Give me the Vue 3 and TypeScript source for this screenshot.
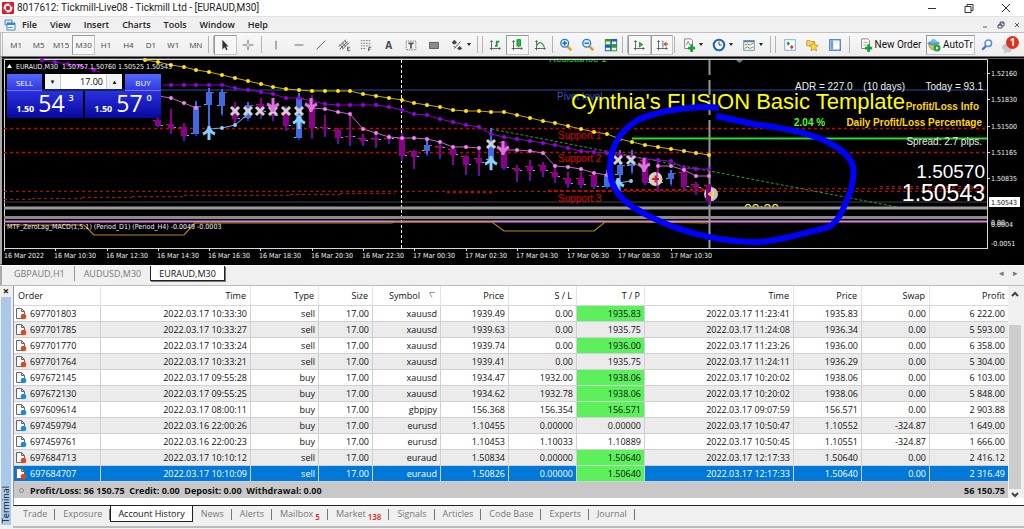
<script setup lang="ts">
import { computed, ref } from 'vue'

interface Candle { x: number; high: number; low: number; top: number; bottom: number; up: boolean }
interface Order {
  id: string; open: string; type: 'buy' | 'sell'; symbol: string; price: string
  sl: string; tp: string; hit: boolean; close: string; exit: string; swap: string; profit: string
}

const menus = ['File', 'View', 'Insert', 'Charts', 'Tools', 'Window', 'Help']
const frames = ['M1', 'M5', 'M15', 'M30', 'H1', 'H4', 'D1', 'W1', 'MN']
const frame = ref('M30')
const volume = ref('17.00')

const START = 145.2
const STEP = 12.82
const barX = (i: number) => Math.round(START + i * STEP)

const slowMa = [60, 62, 65, 67, 70, 72, 75, 78, 81, 84, 87, 89, 90, 91, 91, 91, 91, 94, 96, 98, 100, 103, 105, 107, 110, 111, 111, 112, 112, 115, 118, 121, 123, 126, 129, 132, 134, 139, 142, 145, 147, 149, 151, 153, 155]
const midMa = [85, 85, 85, 85, 85, 85, 85, 88, 90, 92, 94, 98, 98, 101, 104, 105, 105, 105, 105, 107, 110, 114, 115, 119, 122, 125, 127, 134, 137, 139, 141, 143, 145, 148, 151, 152, 153, 155, 157, 159, 160, 161, 168, 169, 169]
const earlyMa = [[42, 60], [55, 62], [68, 64], [80, 66], [94, 70], [100, 72]]
const fastMa: [number, number[]][] = [
  [1, [96, 98, 103, 108]],
  [13, [108, 109, 112, 114, 129, 133, 137, 138, 138, 139, 142, 147, 147, 148]],
  [28, [150, 150, 151, 153, 166, 167, 169, 173, 175]],
  [40, [166, 166, 170, 176, 176]],
]

const pts = (ys: number[], from = 0) => ys.map((y, i) => [barX(from + i), y])
const line = (p: number[][]) => p.map((q) => q.join(',')).join(' ')
const slow = pts(slowMa)
const mid = pts(midMa).slice(2)
const fast = fastMa.map(([from, ys]) => pts(ys, from))

const raw: [number, number, number, number, number][] = [
  [118, 126, 120, 126, 0], [109, 133, 124, 128, 0], [123, 140, 127, 136, 0], [101, 135, 106, 134, 1],
  [88, 129, 92, 105, 1], [89, 115, 92, 106, 1], [102, 124, 107, 119, 0], [102, 120, 105, 118, 1],
  [98, 118, 104, 112, 0], [98, 120, 106, 116, 0], [106, 130, 112, 126, 0], [93, 139, 98, 138, 1],
  [95, 138, 105, 128, 0], [115, 136, 127, 129, 0], [128, 143, 130, 138, 0], [114, 145, 136, 137, 0],
  [134, 145, 138, 141, 0], [131, 147, 138, 140, 0], [134, 143, 138, 139, 0], [133, 160, 138, 156, 0],
  [150, 168, 151, 157, 0], [140, 155, 145, 151, 1], [144, 158, 146, 148, 0], [146, 164, 149, 155, 0],
  [155, 174, 156, 165, 0], [149, 175, 158, 163, 0], [128, 170, 146, 160, 1], [141, 169, 142, 168, 0],
  [165, 181, 168, 171, 0], [160, 180, 166, 171, 0], [162, 176, 165, 171, 0], [168, 182, 172, 177, 0],
  [172, 187, 178, 184, 0], [172, 187, 178, 185, 0], [174, 188, 175, 187, 0], [170, 188, 175, 187, 1],
  [150, 192, 165, 175, 1], [150, 173, 164, 166, 1], [158, 184, 160, 183, 0], [160, 190, 176, 183, 0],
  [170, 185, 173, 179, 1], [170, 190, 172, 187, 0], [182, 194, 184, 188, 0], [184, 204, 185, 201, 0],
]
const candles: Candle[] = raw.map(([high, low, top, bottom, up], i) => ({ x: barX(i + 1), high, low, top, bottom, up: up === 1 }))

const crosses = [[235, 111], [248, 111], [260, 111], [273, 111], [286, 111], [299, 111], [491, 144], [618, 160], [631, 160]]
const upArrows = [[209, 126], [299, 115], [491, 156], [618, 178]]
const downArrows = [[273, 112], [311, 112], [503, 155], [644, 172]]
const times = ['16 Mar 2022', '16 Mar 10:30', '16 Mar 12:30', '16 Mar 14:30', '16 Mar 16:30', '16 Mar 18:30', '16 Mar 20:30', '16 Mar 22:30', '17 Mar 00:30', '17 Mar 02:30', '17 Mar 04:30', '17 Mar 06:30', '17 Mar 08:30', '17 Mar 10:30']
const scale: [string, number][] = [['1.52160', 76], ['1.51830', 102], ['1.51500', 129], ['1.51165', 155], ['1.50835', 181], ['0.00', 225], ['0.0004', 227], ['-0.0051', 246]]

const o = (id: string, open: string, type: 'buy' | 'sell', symbol: string, price: string, sl: string, tp: string, hit: boolean, close: string, exit: string, swap: string, profit: string): Order =>
  ({ id, open: '2022.03.' + open, type, symbol, price, sl, tp, hit, close: '2022.03.17 ' + close, exit, swap, profit })
const orders: Order[] = [
  o('697701803', '17 10:33:30', 'sell', 'xauusd', '1939.49', '0.00', '1935.83', true, '11:23:41', '1935.83', '0.00', '6 222.00'),
  o('697701785', '17 10:33:27', 'sell', 'xauusd', '1939.63', '0.00', '1935.75', false, '11:24:08', '1936.34', '0.00', '5 593.00'),
  o('697701770', '17 10:33:24', 'sell', 'xauusd', '1939.74', '0.00', '1936.00', true, '11:23:26', '1936.00', '0.00', '6 358.00'),
  o('697701764', '17 10:33:21', 'sell', 'xauusd', '1939.41', '0.00', '1935.75', false, '11:24:11', '1936.29', '0.00', '5 304.00'),
  o('697672145', '17 09:55:28', 'buy', 'xauusd', '1934.47', '1932.00', '1938.06', true, '10:20:02', '1938.06', '0.00', '6 103.00'),
  o('697672130', '17 09:55:25', 'buy', 'xauusd', '1934.62', '1932.78', '1938.06', true, '10:20:02', '1938.06', '0.00', '5 848.00'),
  o('697609614', '17 08:00:11', 'buy', 'gbpjpy', '156.368', '156.354', '156.571', true, '09:07:59', '156.571', '0.00', '2 903.88'),
  o('697459794', '16 22:00:26', 'buy', 'eurusd', '1.10455', '0.00000', '0.00000', false, '10:50:47', '1.10552', '-324.87', '1 649.00'),
  o('697459761', '16 22:00:23', 'buy', 'eurusd', '1.10453', '1.10033', '1.10889', false, '10:50:45', '1.10551', '-324.87', '1 666.00'),
  o('697684713', '17 10:10:12', 'sell', 'euraud', '1.50834', '0.00000', '1.50640', true, '12:17:33', '1.50640', '0.00', '2 416.12'),
  o('697684707', '17 10:10:09', 'sell', 'euraud', '1.50826', '0.00000', '1.50640', true, '12:17:33', '1.50640', '0.00', '2 316.49'),
]
const selected = ref('697684707')
const columns = ['Order', 'Time', 'Type', 'Size', 'Symbol', 'Price', 'S / L', 'T / P', 'Time', 'Price', 'Swap', 'Profit']
const total = computed(() => '56 150.75')

const chartTabs = ['GBPAUD,H1', 'AUDUSD,M30', 'EURAUD,M30']
const activeChart = ref('EURAUD,M30')
const panes: { name: string; count?: string }[] = [
  { name: 'Trade' }, { name: 'Exposure' }, { name: 'Account History' }, { name: 'News' }, { name: 'Alerts' },
  { name: 'Mailbox', count: '5' }, { name: 'Market', count: '138' }, { name: 'Signals' }, { name: 'Articles' },
  { name: 'Code Base' }, { name: 'Experts' }, { name: 'Journal' },
]
const pane = ref('Account History')
</script>

<template>
  <div class="app">
    <header class="title">
      <svg class="logo" viewBox="0 0 13 13" aria-hidden="true">
        <rect width="13" height="13" rx="1" fill="#d5202b" />
        <circle cx="6.5" cy="6.5" r="3.6" fill="none" stroke="#fff" stroke-width="2.4" />
        <path d="M2 8 5 11M8 2l3 3" stroke="#d5202b" stroke-width="1.2" />
      </svg>
      <h1>8017612: Tickmill-Live08 - Tickmill Ltd - [EURAUD,M30]</h1>
      <div class="caption">
        <button aria-label="Minimize"><svg viewBox="0 0 10 10"><path d="M1 5.5h8" /></svg></button>
        <button aria-label="Restore"><svg viewBox="0 0 10 10"><path d="M1 3.5h6v6H1zM3 3.5V1.5h6v6H7" /></svg></button>
        <button aria-label="Close"><svg viewBox="0 0 10 10"><path d="M1 1l8 8M9 1 1 9" /></svg></button>
      </div>
    </header>

    <nav class="menu" aria-label="Main">
      <svg class="doc-icon" viewBox="0 0 12 12" aria-hidden="true">
        <path d="M1 1h7v5H1z" fill="#cfe4f7" stroke="#4a90d0" />
        <path d="M3 4h8v7H3z" fill="#fff" stroke="#3c85c8" />
        <path d="M3 5h8" stroke="#3c85c8" stroke-width="2" />
        <path d="m4 9 2-1 1 1 2-1" fill="none" stroke="#3c85c8" />
      </svg>
      <button v-for="m in menus" :key="m">{{ m }}</button>
      <div class="child-caption">
        <button aria-label="Minimize chart"><svg viewBox="0 0 8 8"><path d="M2 6h4" /></svg></button>
        <button aria-label="Restore chart"><svg viewBox="0 0 8 8"><path d="M1 4h4v3H1zM3 4V1h4v4H5M3 2h4M1 4h4" /></svg></button>
        <button aria-label="Close chart"><svg viewBox="0 0 8 8"><path d="M2 2l4 4M6 2 2 6" /></svg></button>
      </div>
    </nav>

    <div class="toolbar" role="toolbar" aria-label="Chart tools">
      <div class="frames">
        <button v-for="f in frames" :key="f" :class="{ on: f === frame }" @click="frame = f">{{ f }}</button>
      </div>
      <i class="grip"></i>
      <div class="pair">
        <button class="on" aria-label="Cursor"><svg viewBox="0 0 16 16"><path d="M5 2v11l2.6-2.5L9.500 14l1.500-.8-1.900-3.500H12z" fill="#333" /></svg></button>
        <button aria-label="Crosshair"><svg viewBox="0 0 16 16" class="ln"><path d="M8 2v5M8 9v5M2 8h5M9 8h5" /></svg></button>
      </div>
      <i class="bar"></i>
      <div class="draw">
        <button aria-label="Vertical line"><svg viewBox="0 0 16 16" class="ln"><path d="M8 3v10" /></svg></button>
        <button aria-label="Horizontal line"><svg viewBox="0 0 16 16" class="ln"><path d="M3 8h10" /></svg></button>
        <button aria-label="Trendline"><svg viewBox="0 0 16 16" class="ln"><path d="M3 13 13 3" /></svg></button>
        <button aria-label="Channel"><svg viewBox="0 0 16 16" class="ln"><path d="M2 10 10 2M3 13l9-9M6 13l8-8M3 7l4 5M6 5l4 5M9 3l3 4" /><path d="M15 10.5h-3v4h3M12 12.5h2" /></svg></button>
        <button aria-label="Fibonacci"><svg viewBox="0 0 16 16" class="ln"><path d="M2 3h12M2 6h12M2 9h12M2 12h6" stroke-dasharray="2 1" stroke="#777" /><path d="M11 15v-4h3M11 13h2" /></svg></button>
        <button aria-label="Text"><b>A</b></button>
        <button aria-label="Text label"><svg viewBox="0 0 16 16" class="ln"><path d="M2.5 3.5h11v10h-11z" stroke-dasharray="1 1" /><path d="M5 6h6M8 6v6" stroke-width="2" /></svg></button>
        <button aria-label="Rectangle"><svg viewBox="0 0 16 16"><rect x="3" y="5" width="10" height="7" fill="#8b8b8b" stroke="#555" /></svg></button>
      </div>
      <button class="drop" aria-label="Arrows"><svg viewBox="0 0 16 16"><path d="m5 2 3 3-2 2H4L2 5zM11 9l3 3-3 2-3-2z" fill="#444" /><path d="m5 12 7-8M4 9l2 2" stroke="#444" /></svg><i></i></button>
      <i class="grip wide"></i>
      <div class="trio">
        <button aria-label="Bar chart"><svg viewBox="0 0 16 16" class="ln"><path d="M4 3v11M2 12h12M2.5 4.5 4 3l1.5 1.5M12.5 10.5 14 12l-1.5 1.5" /><path d="M10 3v7M8 9h2M10 4h3" stroke="#1a9a2d" stroke-width="2" /></svg></button>
        <button class="on" aria-label="Candlesticks"><svg viewBox="0 0 16 16" class="ln"><path d="M4 3v11M2 12h12M2.5 4.5 4 3l1.5 1.5M12.5 10.5 14 12l-1.5 1.5" /><path d="M10 1v10" stroke="#0a8a20" /><rect x="8" y="2" width="4" height="7" fill="#22c040" stroke="#0a8a20" /></svg></button>
        <button aria-label="Line chart"><svg viewBox="0 0 16 16" class="ln"><path d="M4 3v11M2 12h12M2.5 4.5 4 3l1.5 1.5M12.5 10.5 14 12l-1.5 1.5" /><path d="M4 9c3-5 5-5 9 1" stroke="#2aa040" stroke-width="1.5" /></svg></button>
      </div>
      <i class="bar thin"></i>
      <div class="trio">
        <button aria-label="Zoom in"><svg viewBox="0 0 16 16"><path d="m9 9 5 5" stroke="#d8a72a" stroke-width="3" /><circle cx="6.5" cy="6" r="4.5" fill="#d5ebfb" stroke="#2c7cc4" stroke-width="1.5" /><path d="M4 6h5M6.5 3.5v5" stroke="#1c66b0" stroke-width="1.5" /></svg></button>
        <button aria-label="Zoom out"><svg viewBox="0 0 16 16"><path d="m9 9 5 5" stroke="#d8a72a" stroke-width="3" /><circle cx="6.5" cy="6" r="4.5" fill="#d5ebfb" stroke="#2c7cc4" stroke-width="1.5" /><path d="M4 6h5" stroke="#1c66b0" stroke-width="1.5" /></svg></button>
        <button aria-label="Tile windows"><svg viewBox="0 0 16 16"><path d="M1 1h7v7H1zM8 8h7v7H8z" fill="#339922" /><path d="M8 1h7v7H8zM1 8h7v7H1z" fill="#2458c8" /><path d="M2 4h5v3H2zM9 4h5v3H9zM2 11h5v3H2zM9 11h5v3H9z" fill="#e4f2e4" /></svg></button>
      </div>
      <i class="grip small"></i>
      <div class="pair">
        <button class="on" aria-label="Auto scroll"><svg viewBox="0 0 16 16" class="ln"><path d="M4 3v11M2 12h12M2.5 4.5 4 3l1.5 1.5M12.5 10.5 14 12l-1.5 1.5" /><path d="M8 4v7l5-3.5z" fill="#28a838" stroke="none" /></svg></button>
        <button class="on" aria-label="Chart shift"><svg viewBox="0 0 16 16" class="ln"><path d="M4 3v11M2 12h12M2.5 4.5 4 3l1.5 1.5M12.5 10.5 14 12l-1.5 1.5" /><path d="M9 3v8" stroke="#2c6cc0" /><path d="M15 7h-4" stroke="#d05020" stroke-width="1.5" /><path d="M13 4v6l-3.5-3z" fill="#d05020" stroke="none" /></svg></button>
      </div>
      <i class="bar thin"></i>
      <button class="drop" aria-label="Indicators"><svg viewBox="0 0 16 16"><path d="M3 1h7l2 2v9H3z" fill="#fff" stroke="#777" /><path d="m5 8 2-4 2 4" fill="none" stroke="#777" /><path d="M11 7v9M7 11.5h8" stroke="#16a030" stroke-width="3" /></svg><i></i></button>
      <button class="drop" aria-label="Periods"><svg viewBox="0 0 16 16"><circle cx="8" cy="8" r="6" fill="#f4f8ff" stroke="#1f66bd" stroke-width="2.4" /><path d="M8 4v4h3" fill="none" stroke="#333" /></svg><i></i></button>
      <button class="drop" aria-label="Templates"><svg viewBox="0 0 16 16"><rect x="2" y="3" width="12" height="11" fill="#fff" stroke="#5a8a9a" /><path d="M2 4h12" stroke="#4a88b8" stroke-width="2" /><path d="m3 8 3-1 3 1 4-2" fill="none" stroke="#c05020" /><path d="m3 12 3-2 3 2 4-2" fill="none" stroke="#209040" /></svg><i></i></button>
      <i class="grip wider"></i>
      <div class="trio">
        <button aria-label="Market watch"><svg viewBox="0 0 16 16"><rect x="2" y="2" width="12" height="12" fill="#fff" stroke="#6da4d8" /><path d="m6 4 2 2-2 3-2-3z" fill="#20a030" /><path d="m10 8 2 2-2 3-2-3z" fill="#d83020" /></svg></button>
        <button aria-label="Favorites"><svg viewBox="0 0 16 16"><path d="M2 3h4l1 1h4v5H2z" fill="#f3cf6a" stroke="#c99a2c" /><path d="m10 5 1.5 3 3.5.5-2.5 2.5.6 3.5L10 13l-3.1 1.5.6-3.500L5 8.500 8.500 8z" fill="#fbd83c" stroke="#c8961a" /></svg></button>
        <button aria-label="Terminal window"><svg viewBox="0 0 16 16"><rect x="2" y="2" width="12" height="12" fill="#fff" stroke="#4a80c0" stroke-width="1.5" /><path d="M3 3h3v10H3z" fill="#6b9fd8" /><path d="M8 5h5" stroke="#cde" /></svg></button>
      </div>
      <i class="bar mid"></i>
      <button class="wide-btn"><svg viewBox="0 0 16 16"><path d="M3 1h7l2 2v9H3z" fill="#fff" stroke="#777" /><path d="M5 5h5M5 8h4" stroke="#999" /><path d="M11 7v9M7 11.5h8" stroke="#16a030" stroke-width="3" /></svg>New Order</button>
      <button class="wide-btn auto on"><svg viewBox="0 0 16 16"><path d="M2 7c1 8 9 9 11 2z" fill="#e9b84e" stroke="#b98a24" /><ellipse cx="7.5" cy="6" rx="7" ry="2.5" fill="#4fa0d8" /><path d="M4 5c0-5 7-5 7 0z" fill="#74bce8" /><circle cx="11.5" cy="11.5" r="4" fill="#22a83a" /><path d="M10.3 9.5v4l3-2z" fill="#fff" /></svg>AutoTr</button>
      <button class="search" aria-label="Search"><svg viewBox="0 0 16 16"><path d="M7 9 2.5 13.5" stroke="#4070c8" stroke-width="2.5" /><circle cx="9.5" cy="6" r="3.7" fill="#fff" stroke="#5a8ce0" stroke-width="1.8" /></svg></button>
      <button class="alert" aria-label="Notifications"><svg viewBox="0 0 20 20"><path d="M1 13c0-6 10-6 10 0s-5 4-5 4l-3 2 .5-3z" fill="#c8c8c8" /></svg><span>1</span></button>
    </div>

    <main class="chart">
      <svg class="plot" viewBox="0 56 1024 210" role="img" aria-label="EURAUD M30 chart">
        <defs><clipPath id="price"><rect x="4" y="60" width="983" height="147" /></clipPath></defs>
        <rect y="56" width="1024" height="210" fill="#000" />
        <rect y="56" width="1024" height="1" fill="#777" />
        <rect x="2" y="58" width="1022" height="1" fill="#555" />
        <path d="M0 56.500h2v208H0z" fill="#aaa" />
        <path d="M4.500 87V59.500H987.500V248M4.500 87V248" class="edge" />
        <path d="M4 90h983" stroke="#2450a8" />
        <g class="red">
          <path d="M4 128.500h983M4 152.500h983" stroke-width="1.5" />
          <path d="M4 191.500H447M4 199.500h28M32 198.500h50M82 197.500h50M132 196.500h52M184 195.500h54M238 195.500h52M290 194.500h50M340 193.500h55M700 188.500H987M495 191.500H987M683 185 709 193M880 186.500H987" />
          <path d="M447 192h48M548 191h70M618 190h90" stroke-width="2" />
        </g>
        <path d="M4 202h983" stroke="#3c424a" />
        <path d="M491 129 902 208" clip-path="url(#price)" stroke="#28a028" stroke-dasharray="3 2" />
        <path d="M632 138.500H987" stroke="#2bdc2b" stroke-width="2" />
        <path d="M401.500 60V248" stroke="#fff" stroke-dasharray="3 2" />
        <path d="M709.500 60V125" stroke="#999" stroke-width="2" stroke-dasharray="15 5" />
        <path d="M709.500 125V248" stroke="#999" stroke-width="2" />
        <path d="m736 60h7l-3.500 3z" fill="#778" />

        <g clip-path="url(#price)">
          <text x="549" y="62" class="tag" fill="#00e000">Resistance 1</text>
          <text x="744" y="214" class="clock">09:30</text>
          <text x="724" y="214" class="clock">←</text>
        </g>
        <text x="557" y="100" class="tag" fill="#2b59cc">Pivot level</text>

        <g v-for="c in candles" :key="c.x" :fill="c.up ? '#4169e1' : '#8a008a'">
          <rect :x="c.x - 1" :y="c.high" width="2" :height="c.low - c.high" />
          <rect :x="c.x - 3" :y="c.top" width="6" :height="c.bottom - c.top" />
          <rect :x="c.x - 5" :y="c.up ? c.bottom - 1 : c.top" width="2" height="1" :fill="c.up ? '#00e5ff' : '#ff0040'" />
          <rect :x="c.x + 3" :y="c.up ? c.top : c.bottom - 1" width="2" height="1" :fill="c.up ? '#ff3030' : '#00e5ff'" />
          <rect :x="c.x - 1" :y="c.low - 1" width="2" height="2" fill="#1c28d8" />
        </g>

        <g class="violet">
          <polyline :points="line(earlyMa)" />
          <circle v-for="p in earlyMa.slice(0, 5)" :key="p[0]" :cx="p[0]" :cy="p[1]" r="2" />
          <polyline :points="line([[163, 85], ...mid])" />
          <circle v-for="p in mid" :key="p[0]" :cx="p[0]" :cy="p[1]" r="2" />
        </g>
        <g v-for="(s, i) in fast" :key="i" class="orchid">
          <polyline :points="line(s)" />
          <circle v-for="p in s" :key="p[0]" :cx="p[0]" :cy="p[1]" r="2" />
        </g>
        <g class="sky">
          <polyline points="209,129 222,128 235,125 248,114" />
          <circle cx="222" cy="128" r="2" /><circle cx="235" cy="125" r="2" />
          <polyline points="618,183 631,181" /><circle cx="631" cy="181" r="2" />
        </g>
        <g class="gold">
          <polyline :points="line(slow)" />
          <circle v-for="p in slow" :key="p[0]" :cx="p[0]" :cy="p[1]" r="2" />
        </g>

        <text x="558" y="139" class="tag" fill="#e00000">Support 1</text>
        <text x="558" y="162" class="tag" fill="#e00000">Support 2</text>
        <text x="558" y="202" class="tag" fill="#e00000">Support 3</text>
        <text x="571" y="109" class="headline">Cynthia's FUSION Basic Template</text>

        <path v-for="([x, y], i) in crosses" :key="'x' + i" :d="`M${x - 4} ${y - 4}l8 8M${x + 4} ${y - 4}l-8 8`" stroke="#d0d0d0" stroke-width="3" />
        <path v-for="([x, y], i) in upArrows" :key="'u' + i" :d="`M${x} ${y}v14M${x - 6} ${y + 8}q5-2 6-7q1 5 6 7`" class="up" />
        <path v-for="([x, y], i) in downArrows" :key="'d' + i" :d="`M${x} ${y}v-14M${x - 6} ${y - 8}q5 2 6 7q1-5 6-7`" class="down" />

        <circle cx="655.500" cy="179" r="7" fill="#d8d2cc" />
        <path d="M652 179h7M655.500 175.500v7" stroke="#e02020" stroke-width="2" />
        <path d="M657 170v18" stroke="#80007f" />
        <circle cx="711" cy="194" r="7" fill="#c8c4bc" />
        <rect x="706" y="186" width="5" height="15" fill="#80007f" />
        <path d="m713 190-5 4 5 4z" fill="#f0c020" stroke="#fff" stroke-width=".5" />

        <path d="M4 208h983" stroke="#9a9a9a" stroke-width="3" />
        <path d="M4 217.500h983" stroke="#8a8a8a" stroke-width="3" />
        <path d="M4 221.500h983" stroke="#e080e0" stroke-width="2" />
        <path d="M4 225h80l10 10h90l11-12h197l2-1h98l12 9h90l11-9h30l73 1" fill="none" stroke="#b08a10" stroke-width="1.2" />
        <path d="M4 248.500H988" class="edge" />

        <text v-for="(t, i) in times" :key="t" :x="i === 0 ? 4 : Math.round(3 + i * 51.28)" y="258" class="axis">{{ t }}</text>
        <path v-for="(t, i) in times" :key="'t' + t" :d="`M${4.5 + Math.round(i * 51.28)} 248v3`" stroke="#ddd" />
        <text v-for="[t, y] in scale" :key="t" x="991" :y="y" class="axis">{{ t }}</text>
        <path d="M987 73.500h3M987 99.500h3M987 126.500h3M987 152.500h3M987 178.500h3" stroke="#ddd" />
        <rect x="989" y="197" width="31" height="10" fill="#fff" />
        <text x="991" y="205" class="axis dark">1.50543</text>

        <path d="m7 68 2.500-4 2.500 4z" fill="#fff" />
        <text x="16" y="69" class="axis">EURAUD,M30&nbsp; 1.50757 1.50760 1.50525 1.50543</text>
        <text x="7" y="229" class="axis">MTF_ZeroLag_MACD(1,5,1) (Period_D1) (Period_H4) -0.0049 -0.0003</text>

        <text x="795" y="90" class="info">ADR = 227.0</text>
        <text x="905" y="90" class="info end">(10 days)</text>
        <text x="983" y="90" class="info end">Today = 93.1</text>
        <text x="979" y="110" class="pl end">Profit/Loss Info</text>
        <text x="794" y="126" class="pl lime">2.04 %</text>
        <text x="982" y="126" class="pl end">Daily Profit/Loss Percentage</text>
        <text x="982" y="145" class="info end">Spread: 2.7 pips.</text>
        <text x="985" y="178" class="ask end">1.50570</text>
        <text x="985" y="201" class="bid end">1.50543</text>

        <path class="scribble" d="M719 108C705 105 660 109 638 120C617 132 609 152 610 172C612 196 630 207 655 219C690 236 730 242 755 242C780 242 810 231 826 228C840 223 844 206 851 190C856 168 855 160 838 148C815 132 780 128 753 124L716 116" />
        <path d="M0 265.500h1024" stroke="#fff" />
      </svg>

      <form class="one-click" @submit.prevent>
        <button class="side" type="button">SELL</button>
        <div class="lots">
          <button type="button" aria-label="Decrease volume">▼</button>
          <input v-model="volume" aria-label="Volume">
          <button type="button" aria-label="Increase volume">▲</button>
        </div>
        <button class="side" type="button">BUY</button>
        <button class="quote" type="button"><small>1.50</small><span>54</span><sup>3</sup></button>
        <button class="quote" type="button"><small>1.50</small><span>57</span><sup>0</sup></button>
      </form>
    </main>

    <nav class="chart-tabs" aria-label="Open charts">
      <button v-for="t in chartTabs" :key="t" :class="{ active: t === activeChart }" @click="activeChart = t">{{ t }}</button>
      <div class="scrollers">
        <button aria-label="Previous charts">◂</button>
        <button aria-label="Next charts">▸</button>
      </div>
    </nav>

    <section class="terminal">
      <aside>
        <button aria-label="Close terminal">×</button>
        <h2>Terminal</h2>
      </aside>
      <div class="body">
        <div class="history">
          <table>
            <colgroup><col v-for="(c, i) in columns" :key="i" :class="'c' + i"></colgroup>
            <thead>
              <tr><th v-for="(c, i) in columns" :key="i" scope="col">{{ c }}<svg v-if="c === 'Symbol'" viewBox="0 0 8 8"><path d="M7 1.5H1.5L4 6.5" /></svg></th></tr>
            </thead>
            <tbody>
              <tr v-for="r in orders" :key="r.id" :class="{ chosen: r.id === selected }" @click="selected = r.id">
                <td>
                  <svg class="sheet" viewBox="0 0 12 13" aria-hidden="true">
                    <path d="M1.5 1.5h5l3 3v7h-8z" fill="#fff" stroke="#666" />
                    <path d="M6.500 1.500v3h3" fill="none" stroke="#666" />
                    <circle cx="8.5" cy="9.5" r="2.8" :fill="r.type === 'sell' ? '#dc4a1e' : '#1f8ad8'" />
                  </svg>{{ r.id }}
                </td>
                <td>{{ r.open }}</td><td>{{ r.type }}</td><td>17.00</td><td>{{ r.symbol }}</td>
                <td>{{ r.price }}</td><td>{{ r.sl }}</td><td :class="{ hit: r.hit }">{{ r.tp }}</td>
                <td>{{ r.close }}</td><td>{{ r.exit }}</td><td>{{ r.swap }}</td><td>{{ r.profit }}</td>
              </tr>
            </tbody>
            <tfoot>
              <tr>
                <td colspan="8"><i></i>Profit/Loss: {{ total }}&nbsp; Credit: 0.00&nbsp; Deposit: 0.00&nbsp; Withdrawal: 0.00</td>
                <td colspan="4">{{ total }}</td>
              </tr>
            </tfoot>
          </table>
          <div class="scroll" aria-hidden="true">
            <svg viewBox="0 0 8 8"><path d="m1 5 3-3 3 3" /></svg>
            <i></i>
            <svg viewBox="0 0 8 8"><path d="m1 3 3 3 3-3" /></svg>
          </div>
        </div>
        <nav class="panes" aria-label="Terminal panes">
          <button v-for="p in panes" :key="p.name" :class="{ active: p.name === pane }" @click="pane = p.name">{{ p.name }}<sub v-if="p.count">{{ p.count }}</sub></button>
        </nav>
      </div>
    </section>
  </div>
</template>

<style>
body { margin: 0; background: #f0f0f0; }
</style>

<style scoped>
.app { font-family: "Open Sans", "Noto Sans", sans-serif; font-size: 9px; color: #111; background: #f0f0f0; }
.app * { box-sizing: border-box; }
button { font: inherit; color: inherit; background: none; border: 0; padding: 0; margin: 0; white-space: nowrap; }
svg { display: block; flex: none; }

.title { display: flex; align-items: center; height: 16px; background: #fff; padding-left: 2px; }
.logo { width: 12px; height: 12px; }
h1 { font-family: Roboto, sans-serif; font-size: 10px; font-weight: 400; margin: 0 0 0 3px; line-height: 14px; color: #222; }
.caption { display: flex; gap: 27px; margin-left: auto; padding-right: 13px; }
.caption svg { width: 10px; height: 10px; fill: none; stroke: #333; }

.menu { display: flex; align-items: center; height: 17px; padding-left: 4px; border-top: 1px solid #e2e2e2; border-bottom: 1px solid #c0c0c0; font-size: 9px; font-weight: 600; color: #222; }
.doc-icon { width: 12px; height: 12px; margin-right: 6px; }
.menu > button { margin-right: 13px; }
.child-caption { display: flex; gap: 8px; margin-left: auto; padding-right: 3px; }
.child-caption svg { width: 8px; height: 8px; fill: none; stroke: #556; }

.toolbar { display: flex; align-items: center; height: 23px; padding-left: 2px; background: linear-gradient(#f8f8f8, #ededed); border-left: 3px double #bbb; }
.toolbar button { height: 20px; display: flex; align-items: center; justify-content: center; }
.toolbar svg { width: 14px; height: 14px; }
.toolbar .ln { fill: none; stroke: #555; }
.toolbar .on { background: #f7f7f7; border: 1px solid #c4c4c4; border-top-color: #999; border-left-color: #999; }
.frames, .pair, .draw, .trio { display: grid; grid-auto-flow: column; grid-auto-columns: 1fr; flex: none; }
.frames { width: 202px; font-size: 8px; color: #444; }
.pair { width: 45px; }
.draw { width: 180px; font-size: 10px; color: #444; }
.trio { width: 67px; }
.grip, .bar { flex: none; height: 17px; width: 7px; }
.grip::before, .bar::before { content: ""; display: block; height: 100%; width: 4px; margin: 0 auto; border: 1px solid #b4b4b4; border-width: 0 1px; }
.bar::before { width: 1px; border-right: 0; }
.bar { width: 6px; }
.bar.thin { width: 4px; }
.bar.mid { width: 8px; }
.grip.wide { width: 9px; }
.grip.small { width: 6px; }
.grip.wider { width: 12px; }
.drop { width: 30px; gap: 3px; flex: none; }
.drop i { border: 2px solid transparent; border-top: 3px solid #222; border-bottom: 0; }
.wide-btn { width: 72px; gap: 2px; flex: none; }
.toolbar .wide-btn { font-family: Roboto, sans-serif; font-size: 10px; }
.wide-btn.auto { width: 49px; overflow: hidden; justify-content: flex-start; }
.search { width: 24px; margin-left: auto; }
.alert { width: 26px; position: relative; flex: none; }
.toolbar .alert svg { width: 20px; height: 20px; }
.alert span { position: absolute; top: 1px; right: 5px; width: 13px; height: 13px; border-radius: 50%; background: #e0301e; color: #fff; font-size: 10px; font-weight: 700; line-height: 13px; }

.chart { position: relative; }
.plot { width: 100%; height: auto; }
.edge { fill: none; stroke: #d8d8d8; }
.red { stroke: #d40000; stroke-dasharray: 3 3; fill: none; }
polyline { fill: none; stroke-width: 1; }
.violet { stroke: #8a00d0; } .violet circle { fill: #9a00e6; stroke: none; }
.orchid { stroke: #c860c8; } .orchid circle { fill: #ee82ee; stroke: none; }
.sky { stroke: #6ab4ee; } .sky circle { fill: #87cefa; stroke: none; }
.gold { stroke: #c8a800; } .gold circle { fill: #ffe600; stroke: none; }
.up, .down { fill: none; stroke-width: 3; stroke: #87cefa; }
.down { stroke: #e070e0; }
.scribble { fill: none; stroke: #0000ff; stroke-width: 6; stroke-linecap: butt; stroke-linejoin: round; }
.tag, .headline, .info, .pl, .ask, .bid, .clock { font-family: "Liberation Sans", Arial, sans-serif; }
.tag { font-size: 10px; }
.headline { font-size: 22px; fill: #ff0; }
.clock { font-size: 14px; fill: #ff0; }
.info { font-size: 10px; fill: #eee; }
.pl { font-size: 10px; font-weight: 700; fill: #ffd800; }
.lime { fill: #50ff30; }
.ask { font-size: 19px; fill: #fff; }
.bid { font-size: 23px; fill: #fff; }
.end { text-anchor: end; }
.axis { font-family: "DejaVu Sans Condensed", "DejaVu Sans", sans-serif; font-size: 7px; fill: #f0f0f0; }
.dark { fill: #111; }

.one-click { position: absolute; left: 7px; top: 18px; width: 154px; display: grid; grid-template-columns: 35px 6px 35px 2px 36px 4px 36px; grid-template-rows: 17px 27px; color: #fff; }
.side { grid-row: 1; background: linear-gradient(#5468ff, #3038e0); font-size: 8px; border-bottom: 1px solid #7078ff; }
.side:first-child { grid-column: 1; }
.side:nth-of-type(2) { grid-column: 7; }
.lots { grid-row: 1; grid-column: 2 / 7; display: flex; margin: 0 3px 2px; background: #fff; color: #111; }
.lots button { width: 15px; font-size: 6px; background: #f2f2f2; }
.lots input { flex: 1; min-width: 0; border: 1px solid #ccc; border-width: 0 1px; padding: 0 3px; font: inherit; text-align: right; }
.quote { grid-row: 2; grid-column: 1 / 4; display: flex; align-items: baseline; justify-content: center; gap: 4px; line-height: 25px; background: linear-gradient(#2a30e0, #0808a0); }
.quote:last-child { grid-column: 5 / 8; }
.quote small { font-size: 9px; font-weight: 700; }
.quote span { font-size: 23px; }
.quote sup { font-size: 9px; font-weight: 600; line-height: 9px; align-self: flex-start; padding-top: 2px; }

.chart-tabs { display: flex; height: 19px; padding-left: 3px; border-left: 2px solid #aaa; align-items: flex-start; color: #777; background: #f0f0f0; }
.chart-tabs > button { height: 15px; line-height: 15px; padding: 0 9px; }
.chart-tabs > button:first-child { border-right: 1px solid #999; }
.chart-tabs .active { background: #fff; color: #111; border: 1px solid #222; border-top: 0; padding: 0 8px; box-shadow: 1px 1px #777; }
.scrollers { margin-left: auto; display: flex; gap: 9px; padding-right: 6px; line-height: 14px; }

.terminal { display: flex; border-top: 1px solid #bbb; }
aside { width: 13px; flex: none; display: flex; flex-direction: column; align-items: center; justify-content: space-between; background: linear-gradient(#f0f0f0 11px, #a9c8ea 11px); border: 1px solid #f0f0f0; border-width: 0 2px 3px 1px; padding-bottom: 2px; }
aside button { font-size: 11px; line-height: 10px; font-weight: 700; height: 10px; }
h2 { margin: 0; font-size: 9px; font-weight: 400; line-height: 10px; writing-mode: vertical-rl; transform: rotate(180deg); }
.body { flex: 1; min-width: 0; }
.history { display: flex; background: #fff; border-bottom: 1px solid #222; padding-bottom: 7px; border-left: 1px solid #999; }
table { flex: 1; width: 100%; border-collapse: separate; border-spacing: 0; table-layout: fixed; }
.c0 { width: 87px; } .c1 { width: 150px; } .c3 { width: 54px; } .c8 { width: 149px; } .c11 { width: 78px; }
.c2, .c4, .c5, .c6, .c7, .c9, .c10 { width: 68px; }
th, td { padding: 0 3px 0 0; text-align: right; height: 16px; line-height: 15px; border-right: 1px solid #d0d0d0; white-space: nowrap; }
th { height: 20px; font-weight: 400; padding-right: 4px; border-color: #e4e4e4; border-bottom: 1px solid #d8d8d8; }
th:first-child { text-align: left; padding-left: 4px; }
th:last-child, td:last-child { border-right: 0; padding-right: 3px; }
th svg { display: inline-block; width: 8px; height: 8px; margin: 0 0 0 8px; fill: none; stroke: #999; }
td { border-bottom: 1px solid #d0d0d0; }
td:first-child { text-align: left; }
tbody tr:nth-child(even) { background: #ebebeb; }
.sheet { float: left; width: 12px; height: 13px; margin: 1px 3px 0 1px; }
.hit { background: #5cf05c; }
tbody .chosen { background: #0078d7; color: #fff; }
tbody .chosen .hit { color: #111; }
tfoot td { background: #c8c8c8; font-weight: 700; border: 0; }
tfoot td:first-child i { display: inline-block; width: 5px; height: 5px; border: 1px solid #888; border-radius: 50%; margin: 0 6px 1px 5px; }
.scroll { width: 17px; flex: none; display: flex; flex-direction: column; align-items: center; justify-content: space-between; background: #f0f0f0; padding: 5px 4px 0 1px; }
.scroll svg { width: 8px; height: 8px; fill: none; stroke: #444; stroke-width: 2; }
.scroll i { width: 12px; height: 164px; margin-top: 24px; background: #cdcdcd; }
.panes { display: flex; height: 22px; padding: 0 0 0 2px; border-bottom: 2px solid #bbb; color: #777; }
.panes button { height: 15px; line-height: 15px; padding: 0 8px; position: relative; }
.panes button::after { content: ""; position: absolute; right: 0; top: 3px; height: 11px; border-right: 1px solid #777; }
.panes .active { background: #fff; color: #111; border: 1px solid #222; border-top: 0; height: 16px; padding: 0 7px; }
.panes .active::after { display: none; }
sub { color: #e02020; font-size: 8px; font-weight: 600; line-height: 0; vertical-align: -3px; margin-left: 2px; }
</style>
